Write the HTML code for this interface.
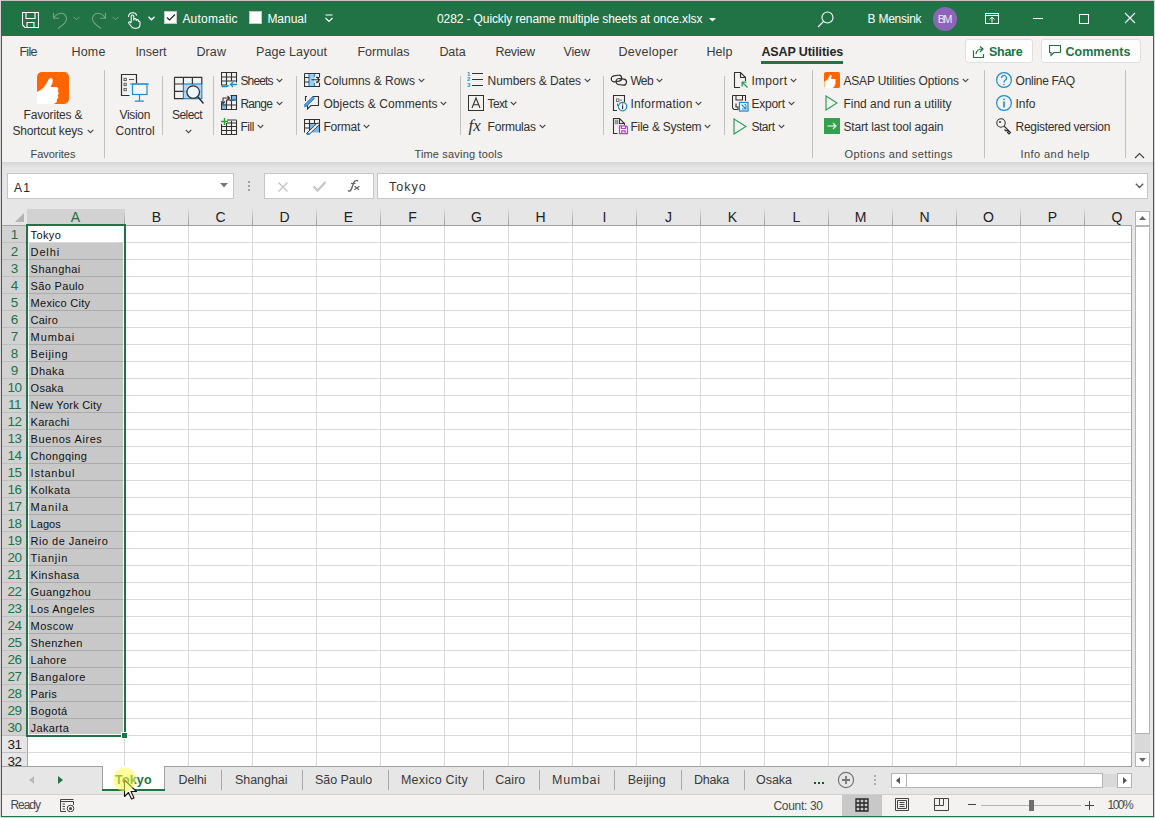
<!DOCTYPE html><html><head><meta charset="utf-8"><style>
html,body{margin:0;padding:0;width:1155px;height:818px;overflow:hidden;background:#f3f2f1}
body{position:relative;font-family:"Liberation Sans",sans-serif}
body>div,body>span,body>svg{position:absolute;display:block}
.t{white-space:pre}
</style></head><body>
<div style="left:0px;top:0px;width:1155px;height:818px;background:#f3f2f1"></div>
<div style="left:0px;top:0px;width:1155px;height:1px;background:#c9c5c7"></div>
<div style="left:1px;top:1px;width:1153px;height:35px;background:#217346"></div>
<div style="left:0px;top:0px;width:1px;height:818px;background:#d8d6d6"></div>
<div style="left:1px;top:36px;width:1px;height:781px;background:#217346"></div>
<div style="left:1153px;top:1px;width:1px;height:817px;background:#217346"></div>
<div style="left:1154px;top:0px;width:1px;height:818px;background:#d8d6d6"></div>
<div style="left:1px;top:816px;width:1153px;height:1px;background:#217346"></div>
<div style="left:0px;top:817px;width:1155px;height:1px;background:#d8d6d6"></div>
<svg style="left:22px;top:12px;" width="17" height="17" viewBox="0 0 17 17"><path d="M0.5 0.5 H16.5 V15.5 H3 L0.5 13z M4 0.5 V6.5 H13 V0.5 M5 15.5 V10.5 H12 V15.5" fill="none" stroke="#fff" stroke-width="1.1"/></svg>
<svg style="left:52px;top:12px;" width="17" height="17" viewBox="0 0 17 17"><path d="M1.5 0.8 V6.2 H7 M1.8 6 C4 2.5 7 1.3 9.5 1.3 C12.5 1.3 14.5 4 14.5 7 C14.5 10 12 12.5 6 16.5" fill="none" stroke="#6fa587" stroke-width="1.1"/></svg>
<svg style="left:73px;top:16px;" width="7" height="5" viewBox="0 0 7 5"><path d="M0.5 0.8 L3.5 3.8 L6.5 0.8" fill="none" stroke="#6fa587" stroke-width="1"/></svg>
<svg style="left:90px;top:12px;" width="17" height="17" viewBox="0 0 17 17"><path d="M15.5 0.8 V6.2 H10 M15.2 6 C13 2.5 10 1.3 7.5 1.3 C4.5 1.3 2.5 4 2.5 7 C2.5 10 5 12.5 11 16.5" fill="none" stroke="#6fa587" stroke-width="1.1"/></svg>
<svg style="left:112px;top:16px;" width="7" height="5" viewBox="0 0 7 5"><path d="M0.5 0.8 L3.5 3.8 L6.5 0.8" fill="none" stroke="#6fa587" stroke-width="1"/></svg>
<svg style="left:127px;top:11px;" width="14" height="18" viewBox="0 0 14 18"><path d="M1.5 6 A4.3 4.3 0 0 1 9.8 4.5 M4.2 11.5 V5.3 A1.3 1.3 0 0 1 6.8 5.3 V9.5 M6.8 8.8 A1.2 1.2 0 0 1 9.2 8.8 V10 M9.2 9.8 A1.2 1.2 0 0 1 11.6 9.8 V10.5 A1.1 1.1 0 0 1 13 11 V13.5 C13 16 11.5 17.3 9 17.3 H7.5 C6 17.3 5 16.5 4 15 L1.8 12.2 C1.2 11.2 2.4 10.3 3.3 11.2 L4.2 12.2" fill="none" stroke="#fff" stroke-width="1.05"/></svg>
<svg style="left:148px;top:16px;" width="7" height="5" viewBox="0 0 7 5"><path d="M0.5 0.8 L3.5 3.8 L6.5 0.8" fill="none" stroke="#fff" stroke-width="1.3"/></svg>
<div style="left:164px;top:11px;width:13px;height:13px;background:#fff;box-sizing:border-box;border:1px solid #c8c8c8"></div>
<svg style="left:166px;top:13px;" width="10" height="9" viewBox="0 0 10 9"><path d="M1 4.5 L3.5 7 L9 1.5" fill="none" stroke="#222" stroke-width="1.2"/></svg>
<span class="t" style="left:182.40px;top:12.84px;font-size:12px;line-height:12px;color:#fff;letter-spacing:0.230px;">Automatic</span>
<div style="left:249px;top:11px;width:13px;height:13px;background:#fff;box-sizing:border-box;border:1px solid #c8c8c8"></div>
<span class="t" style="left:267.40px;top:12.84px;font-size:12px;line-height:12px;color:#fff;letter-spacing:-0.032px;">Manual</span>
<svg style="left:325px;top:14px;" width="8" height="9" viewBox="0 0 8 9"><path d="M0.5 1 H7.5 M0.5 4 L4 7.5 L7.5 4" fill="none" stroke="#fff" stroke-width="1.1"/></svg>
<span class="t" style="left:437.00px;top:12.84px;font-size:12px;line-height:12px;color:#fff;letter-spacing:-0.110px;">0282 - Quickly rename multiple sheets at once.xlsx</span>
<svg style="left:709px;top:18px;" width="7" height="4" viewBox="0 0 7 4"><path d="M0 0 H7 L3.5 3.6z" fill="#fff"/></svg>
<svg style="left:817px;top:11px;" width="17" height="17" viewBox="0 0 17 17"><circle cx="10.5" cy="6.5" r="5.5" fill="none" stroke="#fff" stroke-width="1.1"/><path d="M6.6 10.4 L1 16" stroke="#fff" stroke-width="1.3"/></svg>
<span class="t" style="left:867.60px;top:13.44px;font-size:12px;line-height:12px;color:#fff;letter-spacing:-0.253px;">B Mensink</span>
<div style="left:933px;top:7px;width:24px;height:24px;border-radius:50%;background:#8b65b8"></div>
<span class="t" style="left:937.80px;top:14.09px;font-size:11px;line-height:11px;color:#f0e8f8;letter-spacing:-1.901px;">BM</span>
<svg style="left:985px;top:13px;" width="14" height="11" viewBox="0 0 14 11"><rect x="0.5" y="0.5" width="13" height="10" fill="none" stroke="#fff"/><path d="M0.5 2.5 H13.5 M7 9.5 V4 M4.5 6.5 L7 4 L9.5 6.5" fill="none" stroke="#fff"/></svg>
<div style="left:1033px;top:18px;width:10px;height:1px;background:#fff"></div>
<div style="left:1079px;top:14px;width:10px;height:10px;box-sizing:border-box;border:1px solid #fff"></div>
<svg style="left:1124px;top:12px;" width="12" height="12" viewBox="0 0 12 12"><path d="M1 1 L11 11 M11 1 L1 11" stroke="#fff" stroke-width="1.1"/></svg>
<span class="t" style="left:19.40px;top:45.92px;font-size:12.5px;line-height:12.5px;color:#3b3a39;letter-spacing:-0.714px;">File</span>
<span class="t" style="left:71.40px;top:45.92px;font-size:12.5px;line-height:12.5px;color:#3b3a39;letter-spacing:0.218px;">Home</span>
<span class="t" style="left:135.40px;top:45.92px;font-size:12.5px;line-height:12.5px;color:#3b3a39;letter-spacing:-0.013px;">Insert</span>
<span class="t" style="left:196.40px;top:45.92px;font-size:12.5px;line-height:12.5px;color:#3b3a39;letter-spacing:0.143px;">Draw</span>
<span class="t" style="left:256.00px;top:45.92px;font-size:12.5px;line-height:12.5px;color:#3b3a39;letter-spacing:0.080px;">Page Layout</span>
<span class="t" style="left:357.40px;top:45.92px;font-size:12.5px;line-height:12.5px;color:#3b3a39;letter-spacing:0.015px;">Formulas</span>
<span class="t" style="left:439.40px;top:45.92px;font-size:12.5px;line-height:12.5px;color:#3b3a39;letter-spacing:-0.068px;">Data</span>
<span class="t" style="left:495.40px;top:45.92px;font-size:12.5px;line-height:12.5px;color:#3b3a39;letter-spacing:-0.277px;">Review</span>
<span class="t" style="left:563.40px;top:45.92px;font-size:12.5px;line-height:12.5px;color:#3b3a39;letter-spacing:-0.090px;">View</span>
<span class="t" style="left:618.40px;top:45.92px;font-size:12.5px;line-height:12.5px;color:#3b3a39;letter-spacing:0.278px;">Developer</span>
<span class="t" style="left:706.40px;top:45.92px;font-size:12.5px;line-height:12.5px;color:#3b3a39;letter-spacing:0.097px;">Help</span>
<span class="t" style="left:761.40px;top:45.92px;font-size:12.5px;line-height:12.5px;color:#262626;letter-spacing:-0.102px;font-weight:bold;">ASAP Utilities</span>
<div style="left:761px;top:61px;width:82px;height:3px;background:#217346"></div>
<div style="left:965px;top:39px;width:68px;height:24px;background:#fdfdfd;border-radius:3px;box-sizing:border-box;border:1px solid #e1dfdd"></div>
<div style="left:1041px;top:39px;width:100px;height:24px;background:#fdfdfd;border-radius:3px;box-sizing:border-box;border:1px solid #e1dfdd"></div>
<svg style="left:972px;top:45px;" width="13" height="13" viewBox="0 0 13 13"><path d="M1.5 5.5 V12.5 H11.5 V9 M4 9 C4.5 5.5 7 4 10 4 M8 1.5 L11 4 L8 7" fill="none" stroke="#217346" stroke-width="1.2"/></svg>
<span class="t" style="left:989.00px;top:45.62px;font-size:12.5px;line-height:12.5px;color:#217346;letter-spacing:-0.286px;font-weight:bold;">Share</span>
<svg style="left:1049px;top:45px;" width="13" height="12" viewBox="0 0 13 12"><path d="M0.5 0.5 H11.5 V7.5 H5 L2 10.5 V7.5 H0.5z" fill="none" stroke="#217346" stroke-width="1.1"/></svg>
<span class="t" style="left:1065.40px;top:45.62px;font-size:12.5px;line-height:12.5px;color:#217346;letter-spacing:0.058px;font-weight:bold;">Comments</span>
<div style="left:104px;top:70px;width:1px;height:88px;background:#c2c2c2"></div>
<div style="left:162px;top:76px;width:1px;height:59px;background:#c2c2c2"></div>
<div style="left:213px;top:76px;width:1px;height:59px;background:#c2c2c2"></div>
<div style="left:296px;top:76px;width:1px;height:59px;background:#c2c2c2"></div>
<div style="left:460px;top:76px;width:1px;height:59px;background:#c2c2c2"></div>
<div style="left:603px;top:76px;width:1px;height:59px;background:#c2c2c2"></div>
<div style="left:724px;top:76px;width:1px;height:59px;background:#c2c2c2"></div>
<div style="left:812px;top:70px;width:1px;height:88px;background:#c2c2c2"></div>
<div style="left:984px;top:70px;width:1px;height:88px;background:#c2c2c2"></div>
<div style="left:1125px;top:70px;width:1px;height:88px;background:#c2c2c2"></div>
<div style="left:2px;top:162px;width:1151px;height:6px;background:linear-gradient(#d6d6d6,#e6e6e6)"></div>
<span class="t" style="left:30.50px;top:148.69px;font-size:11px;line-height:11px;color:#444444;letter-spacing:-0.042px;">Favorites</span>
<span class="t" style="left:414.40px;top:148.69px;font-size:11px;line-height:11px;color:#444444;letter-spacing:0.176px;">Time saving tools</span>
<span class="t" style="left:844.60px;top:148.69px;font-size:11px;line-height:11px;color:#444444;letter-spacing:0.406px;">Options and settings</span>
<span class="t" style="left:1020.40px;top:148.69px;font-size:11px;line-height:11px;color:#444444;letter-spacing:0.449px;">Info and help</span>
<div style="left:37px;top:72px;width:32px;height:32px;border-radius:5px;background:#ff6600;overflow:hidden"></div>
<svg style="left:37px;top:72px;" width="32" height="32" viewBox="0 0 32 32"><path d="M0 32 V20 C2.5 19 5 17 7 15 C9 12.5 10.5 9.5 11.5 7.5 C12.5 5 15.8 5.5 15.8 8.5 C15.8 11 14.5 13 13.5 15 L19 15 C21.5 15 22 18 20.5 19 C22 20 22 22.5 20.5 23.5 C21.8 24.5 21.5 27 19.5 27.5 C20.5 28.5 20 31 17.5 31.5 L16.5 32 z" fill="#fff"/></svg>
<span class="t" style="left:23.60px;top:108.84px;font-size:12px;line-height:12px;color:#323130;letter-spacing:-0.169px;">Favorites &amp;</span>
<span class="t" style="left:12.40px;top:124.84px;font-size:12px;line-height:12px;color:#323130;letter-spacing:-0.175px;">Shortcut keys</span>
<svg style="left:87px;top:129px;" width="7" height="5" viewBox="0 0 7 5"><path d="M0.7 0.9 L3.5 3.7 L6.3 0.9" fill="none" stroke="#444" stroke-width="1.1"/></svg>
<svg style="left:120px;top:73px;" width="31" height="30" viewBox="0 0 31 30"><path d="M9.5 22.5 H1.5 V1.5 H16.5 V10.5" fill="none" stroke="#323130" stroke-width="1.2"/><rect x="4" y="5.3" width="2.3" height="2.3" fill="none" stroke="#555" stroke-width="0.9"/><rect x="4" y="10.3" width="2.3" height="2.3" fill="none" stroke="#555" stroke-width="0.9"/><rect x="4" y="15.4" width="2.3" height="2.3" fill="none" stroke="#555" stroke-width="0.9"/><path d="M9 6.5 H14" stroke="#555" stroke-width="1"/><rect x="12.5" y="11" width="14.5" height="10.5" fill="#f5f5f5" stroke="#1e8bcd" stroke-width="1.2"/><path d="M10 11 H29 M19.5 21.5 V28.2 M14.8 28.2 H23.8" stroke="#1e8bcd" stroke-width="1.2" fill="none"/></svg>
<span class="t" style="left:119.40px;top:108.84px;font-size:12px;line-height:12px;color:#323130;letter-spacing:-0.294px;">Vision</span>
<span class="t" style="left:115.40px;top:124.84px;font-size:12px;line-height:12px;color:#323130;letter-spacing:0.086px;">Control</span>
<svg style="left:173px;top:76px;" width="32" height="30" viewBox="0 0 32 30"><rect x="10.4" y="8" width="18.4" height="14.7" fill="#b5d6f3" stroke="#1e8bcd" stroke-width="1.2"/><path d="M1.5 1.3 H28.8 V8 M1.5 1.3 V22.7 H10.4 M10.4 1.3 V8 M19.4 1.3 V8 M1.5 8 H10.4 M1.5 15.4 H10.4" fill="none" stroke="#323130" stroke-width="1.2"/><path d="M19.4 8 V22.7 M10.4 15.4 H28.8" stroke="#5aa5e0" stroke-width="0.8"/><circle cx="20.2" cy="16.1" r="6.3" fill="#eef5fb" stroke="#323130" stroke-width="1.3"/><path d="M24.8 20.8 L30.5 27.5" stroke="#323130" stroke-width="1.5"/></svg>
<span class="t" style="left:172.00px;top:108.84px;font-size:12px;line-height:12px;color:#323130;letter-spacing:-0.550px;">Select</span>
<svg style="left:184.5px;top:129px;" width="7" height="5" viewBox="0 0 7 5"><path d="M0.7 0.9 L3.5 3.7 L6.3 0.9" fill="none" stroke="#444" stroke-width="1.1"/></svg>
<span class="t" style="left:240.40px;top:74.84px;font-size:12px;line-height:12px;color:#323130;letter-spacing:-0.832px;">Sheets</span>
<svg style="left:276.40000000000003px;top:78px;" width="7" height="5" viewBox="0 0 7 5"><path d="M0.7 0.9 L3.5 3.7 L6.3 0.9" fill="none" stroke="#444" stroke-width="1.1"/></svg>
<span class="t" style="left:240.40px;top:97.84px;font-size:12px;line-height:12px;color:#323130;letter-spacing:-0.691px;">Range</span>
<svg style="left:275.8px;top:101px;" width="7" height="5" viewBox="0 0 7 5"><path d="M0.7 0.9 L3.5 3.7 L6.3 0.9" fill="none" stroke="#444" stroke-width="1.1"/></svg>
<span class="t" style="left:240.40px;top:120.84px;font-size:12px;line-height:12px;color:#323130;letter-spacing:-0.443px;">Fill</span>
<svg style="left:257.2px;top:124px;" width="7" height="5" viewBox="0 0 7 5"><path d="M0.7 0.9 L3.5 3.7 L6.3 0.9" fill="none" stroke="#444" stroke-width="1.1"/></svg>
<span class="t" style="left:323.40px;top:74.84px;font-size:12px;line-height:12px;color:#323130;letter-spacing:-0.033px;">Columns &amp; Rows</span>
<svg style="left:417.8px;top:78px;" width="7" height="5" viewBox="0 0 7 5"><path d="M0.7 0.9 L3.5 3.7 L6.3 0.9" fill="none" stroke="#444" stroke-width="1.1"/></svg>
<span class="t" style="left:323.40px;top:97.84px;font-size:12px;line-height:12px;color:#323130;letter-spacing:0.049px;">Objects &amp; Comments</span>
<svg style="left:440.4px;top:101px;" width="7" height="5" viewBox="0 0 7 5"><path d="M0.7 0.9 L3.5 3.7 L6.3 0.9" fill="none" stroke="#444" stroke-width="1.1"/></svg>
<span class="t" style="left:323.40px;top:120.84px;font-size:12px;line-height:12px;color:#323130;letter-spacing:-0.201px;">Format</span>
<svg style="left:363.2px;top:124px;" width="7" height="5" viewBox="0 0 7 5"><path d="M0.7 0.9 L3.5 3.7 L6.3 0.9" fill="none" stroke="#444" stroke-width="1.1"/></svg>
<span class="t" style="left:487.60px;top:74.84px;font-size:12px;line-height:12px;color:#323130;letter-spacing:-0.093px;">Numbers &amp; Dates</span>
<svg style="left:583.8px;top:78px;" width="7" height="5" viewBox="0 0 7 5"><path d="M0.7 0.9 L3.5 3.7 L6.3 0.9" fill="none" stroke="#444" stroke-width="1.1"/></svg>
<span class="t" style="left:487.60px;top:97.84px;font-size:12px;line-height:12px;color:#323130;letter-spacing:-0.669px;">Text</span>
<svg style="left:510.40000000000003px;top:101px;" width="7" height="5" viewBox="0 0 7 5"><path d="M0.7 0.9 L3.5 3.7 L6.3 0.9" fill="none" stroke="#444" stroke-width="1.1"/></svg>
<span class="t" style="left:487.60px;top:120.84px;font-size:12px;line-height:12px;color:#323130;letter-spacing:-0.230px;">Formulas</span>
<svg style="left:538.8px;top:124px;" width="7" height="5" viewBox="0 0 7 5"><path d="M0.7 0.9 L3.5 3.7 L6.3 0.9" fill="none" stroke="#444" stroke-width="1.1"/></svg>
<span class="t" style="left:630.40px;top:74.84px;font-size:12px;line-height:12px;color:#323130;letter-spacing:-0.629px;">Web</span>
<svg style="left:656.4px;top:78px;" width="7" height="5" viewBox="0 0 7 5"><path d="M0.7 0.9 L3.5 3.7 L6.3 0.9" fill="none" stroke="#444" stroke-width="1.1"/></svg>
<span class="t" style="left:630.40px;top:97.84px;font-size:12px;line-height:12px;color:#323130;letter-spacing:0.197px;">Information</span>
<svg style="left:695.1999999999999px;top:101px;" width="7" height="5" viewBox="0 0 7 5"><path d="M0.7 0.9 L3.5 3.7 L6.3 0.9" fill="none" stroke="#444" stroke-width="1.1"/></svg>
<span class="t" style="left:630.40px;top:120.84px;font-size:12px;line-height:12px;color:#323130;letter-spacing:-0.235px;">File &amp; System</span>
<svg style="left:704.4px;top:124px;" width="7" height="5" viewBox="0 0 7 5"><path d="M0.7 0.9 L3.5 3.7 L6.3 0.9" fill="none" stroke="#444" stroke-width="1.1"/></svg>
<span class="t" style="left:751.40px;top:74.84px;font-size:12px;line-height:12px;color:#323130;letter-spacing:0.318px;">Import</span>
<svg style="left:789.8px;top:78px;" width="7" height="5" viewBox="0 0 7 5"><path d="M0.7 0.9 L3.5 3.7 L6.3 0.9" fill="none" stroke="#444" stroke-width="1.1"/></svg>
<span class="t" style="left:751.40px;top:97.84px;font-size:12px;line-height:12px;color:#323130;letter-spacing:-0.217px;">Export</span>
<svg style="left:787.8px;top:101px;" width="7" height="5" viewBox="0 0 7 5"><path d="M0.7 0.9 L3.5 3.7 L6.3 0.9" fill="none" stroke="#444" stroke-width="1.1"/></svg>
<span class="t" style="left:751.40px;top:120.84px;font-size:12px;line-height:12px;color:#323130;letter-spacing:-0.436px;">Start</span>
<svg style="left:777.8px;top:124px;" width="7" height="5" viewBox="0 0 7 5"><path d="M0.7 0.9 L3.5 3.7 L6.3 0.9" fill="none" stroke="#444" stroke-width="1.1"/></svg>
<span class="t" style="left:843.40px;top:74.84px;font-size:12px;line-height:12px;color:#323130;letter-spacing:-0.138px;">ASAP Utilities Options</span>
<svg style="left:961.8px;top:78px;" width="7" height="5" viewBox="0 0 7 5"><path d="M0.7 0.9 L3.5 3.7 L6.3 0.9" fill="none" stroke="#444" stroke-width="1.1"/></svg>
<span class="t" style="left:843.40px;top:97.84px;font-size:12px;line-height:12px;color:#323130;letter-spacing:0.007px;">Find and run a utility</span>
<span class="t" style="left:843.40px;top:120.84px;font-size:12px;line-height:12px;color:#323130;letter-spacing:-0.136px;">Start last tool again</span>
<span class="t" style="left:1015.60px;top:74.84px;font-size:12px;line-height:12px;color:#323130;letter-spacing:-0.292px;">Online FAQ</span>
<span class="t" style="left:1015.60px;top:97.84px;font-size:12px;line-height:12px;color:#323130;letter-spacing:-0.072px;">Info</span>
<span class="t" style="left:1015.60px;top:120.84px;font-size:12px;line-height:12px;color:#323130;letter-spacing:-0.309px;">Registered version</span>
<svg style="left:221px;top:72px;" width="17" height="17" viewBox="0 0 17 17"><path d="M0.5 13.5 V0.5 H15.5 V10.5 M0.5 5 H15.5 M0.5 9 H15.5 M0.5 13 H6 M5.5 0.5 V13 M10.5 0.5 V9" fill="none" stroke="#323130" stroke-width="1.1"/><path d="M0.5 14.5 H5.5 Q7 14.5 7.5 13" fill="none" stroke="#1e8bcd" stroke-width="1.6"/><path d="M16 12.5 H9.5 M12 10 L9.5 12.5 L12 15" fill="none" stroke="#1e8bcd" stroke-width="1.3"/></svg>
<svg style="left:221px;top:95px;" width="17" height="16" viewBox="0 0 17 16"><rect x="10.5" y="1" width="5" height="4" fill="#7ab8ec"/><rect x="0.5" y="8.5" width="5" height="5.5" fill="#7ab8ec"/><path d="M0.5 7.5 V14.5 H15.5 V0.5 H9.5 M5.5 5 V14.5 M10.5 0.5 V14.5 M5.5 5 H15.5 M0.5 10 H15.5" fill="none" stroke="#323130" stroke-width="1.1"/><path d="M9 5.5 H13 M2 8.5 V3 H8.5 M6.5 1 L8.5 3 L6.5 5 M0 6.5 L2 8.5 L4 6.5" fill="none" stroke="#323130" stroke-width="1.1"/><path d="M10 5 H15.5" stroke="#1e8bcd" stroke-width="1.1"/></svg>
<svg style="left:221px;top:118px;" width="17" height="17" viewBox="0 0 17 17"><path d="M0.5 6 V16.5 H15.5 V2 M6 5 H15.5 M0.5 8.5 H15.5 M0.5 12.5 H15.5 M5.5 5 V16.5 M10.5 2 V16.5" fill="none" stroke="#323130" stroke-width="1.1"/><path d="M6 2 H15.5" stroke="#8a8a8a" stroke-width="1.8"/><path d="M3.5 0 V7 M0 3.5 H7" stroke="#2ca02c" stroke-width="1.4"/></svg>
<svg style="left:304px;top:73px;" width="17" height="15" viewBox="0 0 17 15"><rect x="5" y="1" width="5.5" height="12.5" fill="#9fcbf0"/><path d="M5 1 V13.5 M10.5 1 V4 M10.5 10 V13.5" stroke="#1e8bcd" stroke-width="1.2"/><path d="M0.5 0.5 H15.5 V4 M0.5 0.5 V13.5 H15.5 V10 M0.5 4.5 H5 M0.5 9 H5 M12 4.5 H15.5 M12 9 H15.5" fill="none" stroke="#323130" stroke-width="1.1"/><path d="M7.5 6.8 H15.5 M12.5 3.8 L15.5 6.8 L12.5 9.8" fill="none" stroke="#323130" stroke-width="1.1"/></svg>
<svg style="left:304px;top:94px;" width="17" height="17" viewBox="0 0 17 17"><path d="M8.5 2.5 H14.5 V11.5 H7 L3.5 15 V11.5 H1.5 V10 M1.5 7 V2.5 H3" fill="none" stroke="#323130" stroke-width="1.1"/><path d="M0.8 10.2 L8.6 2.4 L10.6 4.4 L2.8 12.2 L0.2 12.8z" fill="#3d93da" stroke="#2b7fc6" stroke-width="0.7"/><path d="M2.5 10.2 L8.5 4.2" stroke="#cfe6fa" stroke-width="0.6" stroke-dasharray="1 1"/></svg>
<svg style="left:304px;top:119px;" width="17" height="16" viewBox="0 0 17 16"><rect x="5.5" y="4.5" width="10" height="9" fill="#7ab8ec"/><path d="M0.5 13.5 V0.5 H15.5 V13.5 M0.5 4.5 H15.5 M0.5 9 H5 M5.5 0.5 V13.5 M10.5 0.5 V4.5" fill="none" stroke="#323130" stroke-width="1.1"/><path d="M2.5 14.5 L12.5 4.8 Q14.5 3.5 15.2 4.5 Q15.8 5.5 14.2 6.8 L5 15.5 Q3.5 16.5 2.5 14.5z" fill="#fff" stroke="#323130" stroke-width="1"/><path d="M2 14 Q3 16.8 6 15.5 L4.5 13.5z" fill="#1e8bcd"/></svg>
<svg style="left:467px;top:70px;" width="17" height="17" viewBox="0 0 17 17"><text x="0" y="5.5" font-size="6" font-family="Liberation Sans" font-weight="bold" fill="#1e8bcd">1</text><text x="0" y="11" font-size="6" font-family="Liberation Sans" font-weight="bold" fill="#1e8bcd">2</text><text x="0" y="16.5" font-size="6" font-family="Liberation Sans" font-weight="bold" fill="#1e8bcd">3</text><path d="M5 3.5 H16 M5 9.5 H16 M5 15.5 H16" stroke="#323130" stroke-width="1.2"/></svg>
<svg style="left:468px;top:95px;" width="17" height="16" viewBox="0 0 17 16"><rect x="0.5" y="0.5" width="15" height="15" fill="none" stroke="#323130"/><path d="M4 13 L8 3 L12 13 M5.3 9.7 H10.7" fill="none" stroke="#323130" stroke-width="1.1"/></svg>
<span class="t" style="left:468.50px;top:117.11px;font-size:17px;line-height:17px;color:#323130;font-family:'Liberation Serif';font-style:italic;">fx</span>
<svg style="left:610px;top:74px;" width="18" height="12" viewBox="0 0 18 12"><rect x="1.2" y="1.5" width="10.5" height="6" rx="3" ry="3" fill="none" stroke="#323130" stroke-width="1.2" transform="rotate(-8 6.5 4.5)"/><rect x="6" y="4.8" width="10.5" height="6" rx="3" ry="3" fill="none" stroke="#323130" stroke-width="1.2" transform="rotate(8 11 7.8)"/></svg>
<svg style="left:612px;top:95px;" width="16" height="17" viewBox="0 0 16 17"><path d="M5 15.5 H1.5 V0.5 H12.5 V7" fill="none" stroke="#323130" stroke-width="1.1"/><rect x="4.5" y="4" width="2.5" height="2.5" fill="none" stroke="#666" stroke-width="0.9"/><path d="M8 5.2 H10 M5.5 8.5 V11" stroke="#666" stroke-width="0.9"/><circle cx="10.6" cy="11.6" r="4.2" fill="#fff" stroke="#1e8bcd" stroke-width="1.2"/><path d="M10.6 10.3 V14.3 M10.6 8.6 V9.4" stroke="#333" stroke-width="1.2"/></svg>
<svg style="left:612px;top:118px;" width="17" height="17" viewBox="0 0 17 17"><path d="M5.5 15.5 H1.5 V0.5 H7.5 L12.5 5.5 V7 M7.5 0.5 V5.5 H12.5" fill="none" stroke="#323130" stroke-width="1.1"/><path d="M2.5 3 H6.5 M2.5 5 H6.5 M3.8 1.5 V6.5 M5.3 1.5 V6.5" stroke="#666" stroke-width="0.7"/><path d="M7.5 7.8 H14 L15.5 9.3 V15.7 H7.5z M9.5 7.8 V10.5 H13.5 V7.8 M9.8 15.7 V12.8 H13.2 V15.7" fill="none" stroke="#b146c2" stroke-width="1.2"/></svg>
<svg style="left:733px;top:72px;" width="16" height="17" viewBox="0 0 16 17"><path d="M7 15.5 H1.5 V0.5 H7.5 L12.5 5.5 V9 M7.5 0.5 V5.5 H12.5" fill="none" stroke="#323130" stroke-width="1.1"/><path d="M14.5 15.5 L9.5 10.5 M9.2 14.5 V10.2 H13.5" fill="none" stroke="#2ca05a" stroke-width="1.3"/></svg>
<svg style="left:732px;top:95px;" width="17" height="17" viewBox="0 0 17 17"><path d="M0.5 0.5 H13.5 V6 M0.5 0.5 V13 L2 14.5 H6 V12 H4 V8.5 M4 0.5 V5 H10.5 V0.5" fill="none" stroke="#323130" stroke-width="1.1"/><rect x="7.5" y="7.5" width="8.5" height="8.5" fill="#fff" stroke="#1e8bcd" stroke-width="1.3"/><path d="M9.5 9.5 L14 14 M14 10 V14 H10 M12.5 9.5 H14" fill="none" stroke="#1e8bcd" stroke-width="1.1"/></svg>
<svg style="left:733px;top:118px;" width="14" height="17" viewBox="0 0 14 17"><path d="M1 1 L13 8.5 L1 16z" fill="none" stroke="#2ca05a" stroke-width="1.2"/></svg>
<div style="left:824px;top:72px;width:16px;height:16px;border-radius:2px;background:#ff6600;overflow:hidden"></div>
<svg style="left:824px;top:72px;" width="16" height="16" viewBox="0 0 16 16"><path d="M0.5 16 V9.5 C2 9 3.5 8 4.5 6 C5 4 5.8 2.5 7 3 C8 3.5 7.5 5.5 7 7 L10.5 7 C12 7 12 8.5 11 9 C12 9.5 12 10.5 11 11 C12 11.5 11.5 13 10.5 13 C11 13.8 10.5 15 9.5 15 L9 16z" fill="#fff"/></svg>
<svg style="left:825px;top:95px;" width="13" height="16" viewBox="0 0 13 16"><path d="M1 1 L12 8 L1 15z" fill="none" stroke="#2ca05a" stroke-width="1.2"/></svg>
<div style="left:824px;top:118px;width:16px;height:16px;background:#33a14a"></div>
<svg style="left:824px;top:118px;" width="16" height="16" viewBox="0 0 16 16"><path d="M3.5 8 H12 M9 5 L12 8 L9 11" fill="none" stroke="#fff" stroke-width="1.1"/></svg>
<svg style="left:996px;top:72px;" width="17" height="17" viewBox="0 0 17 17"><circle cx="8" cy="8" r="7.4" fill="none" stroke="#1e8bcd" stroke-width="1.2"/><path d="M5.5 6 a2.5 2.5 0 1 1 3.5 2.3 C8 8.8 8 9.5 8 10.5" fill="none" stroke="#1e8bcd" stroke-width="1.2"/><circle cx="8" cy="12.5" r="0.8" fill="#1e8bcd"/></svg>
<svg style="left:996px;top:95px;" width="17" height="17" viewBox="0 0 17 17"><circle cx="8" cy="8" r="7.4" fill="none" stroke="#1e8bcd" stroke-width="1.2"/><path d="M8 6.5 V12.5" stroke="#1e8bcd" stroke-width="1.6"/><circle cx="8" cy="4.3" r="0.9" fill="#1e8bcd"/></svg>
<svg style="left:996px;top:118px;" width="17" height="17" viewBox="0 0 17 17"><circle cx="5" cy="5" r="4.2" fill="none" stroke="#323130" stroke-width="1.1"/><circle cx="4" cy="4" r="1" fill="#323130"/><path d="M8 8 L14.5 14.5 L13 16 L11.5 14.5 L12.5 13.5 L11 12 L10 13 L8.5 11.5" fill="none" stroke="#323130" stroke-width="1.1"/></svg>
<svg style="left:1134px;top:152px;" width="11" height="7" viewBox="0 0 11 7"><path d="M1 6 L5.5 1.5 L10 6" fill="none" stroke="#444" stroke-width="1.2"/></svg>
<div style="left:2px;top:168px;width:1151px;height:598px;background:#e6e6e6"></div>
<div style="left:7px;top:173px;width:227px;height:26px;background:#fff;box-sizing:border-box;border:1px solid #c6c6c6"></div>
<span class="t" style="left:14.00px;top:181.84px;font-size:12px;line-height:12px;color:#262626;letter-spacing:1.322px;">A1</span>
<svg style="left:220px;top:183px;" width="8" height="5" viewBox="0 0 8 5"><path d="M0 0 H8 L4 4.5z" fill="#777"/></svg>
<div style="left:248px;top:181px;width:2px;height:2px;background:#a0a0a0"></div>
<div style="left:248px;top:185px;width:2px;height:2px;background:#a0a0a0"></div>
<div style="left:248px;top:189px;width:2px;height:2px;background:#a0a0a0"></div>
<div style="left:264px;top:173px;width:110px;height:26px;background:#fff;box-sizing:border-box;border:1px solid #c6c6c6"></div>
<svg style="left:277px;top:182px;" width="12" height="10" viewBox="0 0 12 10"><path d="M1.5 0.5 L10.5 9.5 M10.5 0.5 L1.5 9.5" stroke="#c4c4c4" stroke-width="1.3"/></svg>
<svg style="left:312px;top:180px;" width="15" height="13" viewBox="0 0 15 13"><path d="M1.5 6.5 L5.5 10.5 L13.5 2" fill="none" stroke="#c6c6c6" stroke-width="2.4"/></svg>
<svg style="left:346px;top:178px;" width="16" height="16" viewBox="0 0 16 16"><path d="M2.5 12.8 C4 13.3 5 12.5 5.6 10.5 L7.8 4.5 C8.4 3 9.6 2.3 11.5 2.8" fill="none" stroke="#666" stroke-width="1.4" stroke-linecap="round"/><path d="M5 5.5 H9.5" stroke="#666" stroke-width="1.1"/><path d="M8.5 8.3 L13 11.8 M13.5 8.3 L8.3 11.8" stroke="#666" stroke-width="1.2"/></svg>
<div style="left:377px;top:173px;width:771px;height:26px;background:#fff;box-sizing:border-box;border:1px solid #c6c6c6"></div>
<span class="t" style="left:389.00px;top:181.42px;font-size:12.5px;line-height:12.5px;color:#333;letter-spacing:0.986px;">Tokyo</span>
<svg style="left:1135px;top:183px;" width="9" height="6" viewBox="0 0 9 6"><path d="M0.8 0.8 L4.5 4.5 L8.2 0.8" fill="none" stroke="#555" stroke-width="1.3"/></svg>
<div style="left:2px;top:209px;width:1130px;height:16px;background:#e6e6e6"></div>
<div style="left:27px;top:209px;width:98px;height:16px;background:#d2d2d2"></div>
<div style="left:2px;top:225px;width:1130px;height:1px;background:#a2a2a2"></div>
<div style="left:124px;top:209px;width:1px;height:16px;background:linear-gradient(#dadada,#9c9c9c)"></div>
<div style="left:188px;top:209px;width:1px;height:16px;background:linear-gradient(#dadada,#9c9c9c)"></div>
<div style="left:252px;top:209px;width:1px;height:16px;background:linear-gradient(#dadada,#9c9c9c)"></div>
<div style="left:316px;top:209px;width:1px;height:16px;background:linear-gradient(#dadada,#9c9c9c)"></div>
<div style="left:380px;top:209px;width:1px;height:16px;background:linear-gradient(#dadada,#9c9c9c)"></div>
<div style="left:444px;top:209px;width:1px;height:16px;background:linear-gradient(#dadada,#9c9c9c)"></div>
<div style="left:508px;top:209px;width:1px;height:16px;background:linear-gradient(#dadada,#9c9c9c)"></div>
<div style="left:572px;top:209px;width:1px;height:16px;background:linear-gradient(#dadada,#9c9c9c)"></div>
<div style="left:636px;top:209px;width:1px;height:16px;background:linear-gradient(#dadada,#9c9c9c)"></div>
<div style="left:700px;top:209px;width:1px;height:16px;background:linear-gradient(#dadada,#9c9c9c)"></div>
<div style="left:764px;top:209px;width:1px;height:16px;background:linear-gradient(#dadada,#9c9c9c)"></div>
<div style="left:828px;top:209px;width:1px;height:16px;background:linear-gradient(#dadada,#9c9c9c)"></div>
<div style="left:892px;top:209px;width:1px;height:16px;background:linear-gradient(#dadada,#9c9c9c)"></div>
<div style="left:956px;top:209px;width:1px;height:16px;background:linear-gradient(#dadada,#9c9c9c)"></div>
<div style="left:1020px;top:209px;width:1px;height:16px;background:linear-gradient(#dadada,#9c9c9c)"></div>
<div style="left:1084px;top:209px;width:1px;height:16px;background:linear-gradient(#dadada,#9c9c9c)"></div>
<span class="t" style="left:70.83px;top:210.15px;font-size:14px;line-height:14px;color:#217346;">A</span>
<span class="t" style="left:151.83px;top:210.15px;font-size:14px;line-height:14px;color:#222;">B</span>
<span class="t" style="left:215.44px;top:210.15px;font-size:14px;line-height:14px;color:#222;">C</span>
<span class="t" style="left:279.44px;top:210.15px;font-size:14px;line-height:14px;color:#222;">D</span>
<span class="t" style="left:343.83px;top:210.15px;font-size:14px;line-height:14px;color:#222;">E</span>
<span class="t" style="left:408.22px;top:210.15px;font-size:14px;line-height:14px;color:#222;">F</span>
<span class="t" style="left:471.06px;top:210.15px;font-size:14px;line-height:14px;color:#222;">G</span>
<span class="t" style="left:535.44px;top:210.15px;font-size:14px;line-height:14px;color:#222;">H</span>
<span class="t" style="left:602.56px;top:210.15px;font-size:14px;line-height:14px;color:#222;">I</span>
<span class="t" style="left:665.00px;top:210.15px;font-size:14px;line-height:14px;color:#222;">J</span>
<span class="t" style="left:727.83px;top:210.15px;font-size:14px;line-height:14px;color:#222;">K</span>
<span class="t" style="left:792.61px;top:210.15px;font-size:14px;line-height:14px;color:#222;">L</span>
<span class="t" style="left:854.67px;top:210.15px;font-size:14px;line-height:14px;color:#222;">M</span>
<span class="t" style="left:919.44px;top:210.15px;font-size:14px;line-height:14px;color:#222;">N</span>
<span class="t" style="left:983.06px;top:210.15px;font-size:14px;line-height:14px;color:#222;">O</span>
<span class="t" style="left:1047.83px;top:210.15px;font-size:14px;line-height:14px;color:#222;">P</span>
<span class="t" style="left:1111.56px;top:210.15px;font-size:14px;line-height:14px;color:#222;">Q</span>
<svg style="left:15px;top:213px;" width="9" height="9" viewBox="0 0 9 9"><path d="M9 0 V9 H0z" fill="#b4b4b4"/></svg>
<div style="left:27px;top:226px;width:1105px;height:540px;background:#fff"></div>
<div style="left:27px;top:242px;width:1105px;height:1px;background:#d9d9d9"></div>
<div style="left:27px;top:259px;width:1105px;height:1px;background:#d9d9d9"></div>
<div style="left:27px;top:276px;width:1105px;height:1px;background:#d9d9d9"></div>
<div style="left:27px;top:293px;width:1105px;height:1px;background:#d9d9d9"></div>
<div style="left:27px;top:310px;width:1105px;height:1px;background:#d9d9d9"></div>
<div style="left:27px;top:327px;width:1105px;height:1px;background:#d9d9d9"></div>
<div style="left:27px;top:344px;width:1105px;height:1px;background:#d9d9d9"></div>
<div style="left:27px;top:361px;width:1105px;height:1px;background:#d9d9d9"></div>
<div style="left:27px;top:378px;width:1105px;height:1px;background:#d9d9d9"></div>
<div style="left:27px;top:395px;width:1105px;height:1px;background:#d9d9d9"></div>
<div style="left:27px;top:412px;width:1105px;height:1px;background:#d9d9d9"></div>
<div style="left:27px;top:429px;width:1105px;height:1px;background:#d9d9d9"></div>
<div style="left:27px;top:446px;width:1105px;height:1px;background:#d9d9d9"></div>
<div style="left:27px;top:463px;width:1105px;height:1px;background:#d9d9d9"></div>
<div style="left:27px;top:480px;width:1105px;height:1px;background:#d9d9d9"></div>
<div style="left:27px;top:497px;width:1105px;height:1px;background:#d9d9d9"></div>
<div style="left:27px;top:514px;width:1105px;height:1px;background:#d9d9d9"></div>
<div style="left:27px;top:531px;width:1105px;height:1px;background:#d9d9d9"></div>
<div style="left:27px;top:548px;width:1105px;height:1px;background:#d9d9d9"></div>
<div style="left:27px;top:565px;width:1105px;height:1px;background:#d9d9d9"></div>
<div style="left:27px;top:582px;width:1105px;height:1px;background:#d9d9d9"></div>
<div style="left:27px;top:599px;width:1105px;height:1px;background:#d9d9d9"></div>
<div style="left:27px;top:616px;width:1105px;height:1px;background:#d9d9d9"></div>
<div style="left:27px;top:633px;width:1105px;height:1px;background:#d9d9d9"></div>
<div style="left:27px;top:650px;width:1105px;height:1px;background:#d9d9d9"></div>
<div style="left:27px;top:667px;width:1105px;height:1px;background:#d9d9d9"></div>
<div style="left:27px;top:684px;width:1105px;height:1px;background:#d9d9d9"></div>
<div style="left:27px;top:701px;width:1105px;height:1px;background:#d9d9d9"></div>
<div style="left:27px;top:718px;width:1105px;height:1px;background:#d9d9d9"></div>
<div style="left:27px;top:735px;width:1105px;height:1px;background:#d9d9d9"></div>
<div style="left:27px;top:752px;width:1105px;height:1px;background:#d9d9d9"></div>
<div style="left:27px;top:769px;width:1105px;height:1px;background:#d9d9d9"></div>
<div style="left:124px;top:226px;width:1px;height:540px;background:#d9d9d9"></div>
<div style="left:188px;top:226px;width:1px;height:540px;background:#d9d9d9"></div>
<div style="left:252px;top:226px;width:1px;height:540px;background:#d9d9d9"></div>
<div style="left:316px;top:226px;width:1px;height:540px;background:#d9d9d9"></div>
<div style="left:380px;top:226px;width:1px;height:540px;background:#d9d9d9"></div>
<div style="left:444px;top:226px;width:1px;height:540px;background:#d9d9d9"></div>
<div style="left:508px;top:226px;width:1px;height:540px;background:#d9d9d9"></div>
<div style="left:572px;top:226px;width:1px;height:540px;background:#d9d9d9"></div>
<div style="left:636px;top:226px;width:1px;height:540px;background:#d9d9d9"></div>
<div style="left:700px;top:226px;width:1px;height:540px;background:#d9d9d9"></div>
<div style="left:764px;top:226px;width:1px;height:540px;background:#d9d9d9"></div>
<div style="left:828px;top:226px;width:1px;height:540px;background:#d9d9d9"></div>
<div style="left:892px;top:226px;width:1px;height:540px;background:#d9d9d9"></div>
<div style="left:956px;top:226px;width:1px;height:540px;background:#d9d9d9"></div>
<div style="left:1020px;top:226px;width:1px;height:540px;background:#d9d9d9"></div>
<div style="left:1084px;top:226px;width:1px;height:540px;background:#d9d9d9"></div>
<div style="left:2px;top:226px;width:25px;height:540px;background:#e6e6e6"></div>
<div style="left:2px;top:226px;width:25px;height:509px;background:#d2d2d2"></div>
<div style="left:2px;top:242px;width:25px;height:1px;background:#c0c0c0"></div>
<div style="left:2px;top:259px;width:25px;height:1px;background:#c0c0c0"></div>
<div style="left:2px;top:276px;width:25px;height:1px;background:#c0c0c0"></div>
<div style="left:2px;top:293px;width:25px;height:1px;background:#c0c0c0"></div>
<div style="left:2px;top:310px;width:25px;height:1px;background:#c0c0c0"></div>
<div style="left:2px;top:327px;width:25px;height:1px;background:#c0c0c0"></div>
<div style="left:2px;top:344px;width:25px;height:1px;background:#c0c0c0"></div>
<div style="left:2px;top:361px;width:25px;height:1px;background:#c0c0c0"></div>
<div style="left:2px;top:378px;width:25px;height:1px;background:#c0c0c0"></div>
<div style="left:2px;top:395px;width:25px;height:1px;background:#c0c0c0"></div>
<div style="left:2px;top:412px;width:25px;height:1px;background:#c0c0c0"></div>
<div style="left:2px;top:429px;width:25px;height:1px;background:#c0c0c0"></div>
<div style="left:2px;top:446px;width:25px;height:1px;background:#c0c0c0"></div>
<div style="left:2px;top:463px;width:25px;height:1px;background:#c0c0c0"></div>
<div style="left:2px;top:480px;width:25px;height:1px;background:#c0c0c0"></div>
<div style="left:2px;top:497px;width:25px;height:1px;background:#c0c0c0"></div>
<div style="left:2px;top:514px;width:25px;height:1px;background:#c0c0c0"></div>
<div style="left:2px;top:531px;width:25px;height:1px;background:#c0c0c0"></div>
<div style="left:2px;top:548px;width:25px;height:1px;background:#c0c0c0"></div>
<div style="left:2px;top:565px;width:25px;height:1px;background:#c0c0c0"></div>
<div style="left:2px;top:582px;width:25px;height:1px;background:#c0c0c0"></div>
<div style="left:2px;top:599px;width:25px;height:1px;background:#c0c0c0"></div>
<div style="left:2px;top:616px;width:25px;height:1px;background:#c0c0c0"></div>
<div style="left:2px;top:633px;width:25px;height:1px;background:#c0c0c0"></div>
<div style="left:2px;top:650px;width:25px;height:1px;background:#c0c0c0"></div>
<div style="left:2px;top:667px;width:25px;height:1px;background:#c0c0c0"></div>
<div style="left:2px;top:684px;width:25px;height:1px;background:#c0c0c0"></div>
<div style="left:2px;top:701px;width:25px;height:1px;background:#c0c0c0"></div>
<div style="left:2px;top:718px;width:25px;height:1px;background:#c0c0c0"></div>
<div style="left:2px;top:735px;width:25px;height:1px;background:#c0c0c0"></div>
<div style="left:2px;top:752px;width:25px;height:1px;background:#c0c0c0"></div>
<div style="left:2px;top:769px;width:25px;height:1px;background:#c0c0c0"></div>
<div style="left:26px;top:226px;width:1px;height:540px;background:#a8a8a8"></div>
<div style="left:26px;top:737px;width:2px;height:29px;background:#e6e6e6"></div>
<div style="left:27px;top:737px;width:1px;height:29px;background:#a8a8a8"></div>
<span class="t" style="left:10.65px;top:227.87px;font-size:13.5px;line-height:13.5px;color:#217346;letter-spacing:-0.5px;">1</span>
<span class="t" style="left:10.65px;top:244.87px;font-size:13.5px;line-height:13.5px;color:#217346;letter-spacing:-0.5px;">2</span>
<span class="t" style="left:10.65px;top:261.87px;font-size:13.5px;line-height:13.5px;color:#217346;letter-spacing:-0.5px;">3</span>
<span class="t" style="left:10.65px;top:278.87px;font-size:13.5px;line-height:13.5px;color:#217346;letter-spacing:-0.5px;">4</span>
<span class="t" style="left:10.65px;top:295.87px;font-size:13.5px;line-height:13.5px;color:#217346;letter-spacing:-0.5px;">5</span>
<span class="t" style="left:10.65px;top:312.87px;font-size:13.5px;line-height:13.5px;color:#217346;letter-spacing:-0.5px;">6</span>
<span class="t" style="left:10.65px;top:329.87px;font-size:13.5px;line-height:13.5px;color:#217346;letter-spacing:-0.5px;">7</span>
<span class="t" style="left:10.65px;top:346.87px;font-size:13.5px;line-height:13.5px;color:#217346;letter-spacing:-0.5px;">8</span>
<span class="t" style="left:10.65px;top:363.87px;font-size:13.5px;line-height:13.5px;color:#217346;letter-spacing:-0.5px;">9</span>
<span class="t" style="left:7.59px;top:380.87px;font-size:13.5px;line-height:13.5px;color:#217346;letter-spacing:-0.5px;">10</span>
<span class="t" style="left:8.09px;top:397.87px;font-size:13.5px;line-height:13.5px;color:#217346;letter-spacing:-0.5px;">11</span>
<span class="t" style="left:7.59px;top:414.87px;font-size:13.5px;line-height:13.5px;color:#217346;letter-spacing:-0.5px;">12</span>
<span class="t" style="left:7.59px;top:431.87px;font-size:13.5px;line-height:13.5px;color:#217346;letter-spacing:-0.5px;">13</span>
<span class="t" style="left:7.59px;top:448.87px;font-size:13.5px;line-height:13.5px;color:#217346;letter-spacing:-0.5px;">14</span>
<span class="t" style="left:7.59px;top:465.87px;font-size:13.5px;line-height:13.5px;color:#217346;letter-spacing:-0.5px;">15</span>
<span class="t" style="left:7.59px;top:482.87px;font-size:13.5px;line-height:13.5px;color:#217346;letter-spacing:-0.5px;">16</span>
<span class="t" style="left:7.59px;top:499.87px;font-size:13.5px;line-height:13.5px;color:#217346;letter-spacing:-0.5px;">17</span>
<span class="t" style="left:7.59px;top:516.87px;font-size:13.5px;line-height:13.5px;color:#217346;letter-spacing:-0.5px;">18</span>
<span class="t" style="left:7.59px;top:533.87px;font-size:13.5px;line-height:13.5px;color:#217346;letter-spacing:-0.5px;">19</span>
<span class="t" style="left:7.59px;top:550.87px;font-size:13.5px;line-height:13.5px;color:#217346;letter-spacing:-0.5px;">20</span>
<span class="t" style="left:7.59px;top:567.87px;font-size:13.5px;line-height:13.5px;color:#217346;letter-spacing:-0.5px;">21</span>
<span class="t" style="left:7.59px;top:584.87px;font-size:13.5px;line-height:13.5px;color:#217346;letter-spacing:-0.5px;">22</span>
<span class="t" style="left:7.59px;top:601.87px;font-size:13.5px;line-height:13.5px;color:#217346;letter-spacing:-0.5px;">23</span>
<span class="t" style="left:7.59px;top:618.87px;font-size:13.5px;line-height:13.5px;color:#217346;letter-spacing:-0.5px;">24</span>
<span class="t" style="left:7.59px;top:635.87px;font-size:13.5px;line-height:13.5px;color:#217346;letter-spacing:-0.5px;">25</span>
<span class="t" style="left:7.59px;top:652.87px;font-size:13.5px;line-height:13.5px;color:#217346;letter-spacing:-0.5px;">26</span>
<span class="t" style="left:7.59px;top:669.87px;font-size:13.5px;line-height:13.5px;color:#217346;letter-spacing:-0.5px;">27</span>
<span class="t" style="left:7.59px;top:686.87px;font-size:13.5px;line-height:13.5px;color:#217346;letter-spacing:-0.5px;">28</span>
<span class="t" style="left:7.59px;top:703.87px;font-size:13.5px;line-height:13.5px;color:#217346;letter-spacing:-0.5px;">29</span>
<span class="t" style="left:7.59px;top:720.87px;font-size:13.5px;line-height:13.5px;color:#217346;letter-spacing:-0.5px;">30</span>
<span class="t" style="left:7.59px;top:737.87px;font-size:13.5px;line-height:13.5px;color:#222;letter-spacing:-0.5px;">31</span>
<span class="t" style="left:7.59px;top:754.87px;font-size:13.5px;line-height:13.5px;color:#222;letter-spacing:-0.5px;">32</span>
<div style="left:29px;top:243px;width:94px;height:491px;background:#c8c8c8"></div>
<div style="left:29px;top:259px;width:94px;height:1px;background:#aaaaaa"></div>
<div style="left:29px;top:276px;width:94px;height:1px;background:#aaaaaa"></div>
<div style="left:29px;top:293px;width:94px;height:1px;background:#aaaaaa"></div>
<div style="left:29px;top:310px;width:94px;height:1px;background:#aaaaaa"></div>
<div style="left:29px;top:327px;width:94px;height:1px;background:#aaaaaa"></div>
<div style="left:29px;top:344px;width:94px;height:1px;background:#aaaaaa"></div>
<div style="left:29px;top:361px;width:94px;height:1px;background:#aaaaaa"></div>
<div style="left:29px;top:378px;width:94px;height:1px;background:#aaaaaa"></div>
<div style="left:29px;top:395px;width:94px;height:1px;background:#aaaaaa"></div>
<div style="left:29px;top:412px;width:94px;height:1px;background:#aaaaaa"></div>
<div style="left:29px;top:429px;width:94px;height:1px;background:#aaaaaa"></div>
<div style="left:29px;top:446px;width:94px;height:1px;background:#aaaaaa"></div>
<div style="left:29px;top:463px;width:94px;height:1px;background:#aaaaaa"></div>
<div style="left:29px;top:480px;width:94px;height:1px;background:#aaaaaa"></div>
<div style="left:29px;top:497px;width:94px;height:1px;background:#aaaaaa"></div>
<div style="left:29px;top:514px;width:94px;height:1px;background:#aaaaaa"></div>
<div style="left:29px;top:531px;width:94px;height:1px;background:#aaaaaa"></div>
<div style="left:29px;top:548px;width:94px;height:1px;background:#aaaaaa"></div>
<div style="left:29px;top:565px;width:94px;height:1px;background:#aaaaaa"></div>
<div style="left:29px;top:582px;width:94px;height:1px;background:#aaaaaa"></div>
<div style="left:29px;top:599px;width:94px;height:1px;background:#aaaaaa"></div>
<div style="left:29px;top:616px;width:94px;height:1px;background:#aaaaaa"></div>
<div style="left:29px;top:633px;width:94px;height:1px;background:#aaaaaa"></div>
<div style="left:29px;top:650px;width:94px;height:1px;background:#aaaaaa"></div>
<div style="left:29px;top:667px;width:94px;height:1px;background:#aaaaaa"></div>
<div style="left:29px;top:684px;width:94px;height:1px;background:#aaaaaa"></div>
<div style="left:29px;top:701px;width:94px;height:1px;background:#aaaaaa"></div>
<div style="left:29px;top:718px;width:94px;height:1px;background:#aaaaaa"></div>
<div style="left:29px;top:735px;width:94px;height:1px;background:#aaaaaa"></div>
<div style="left:28px;top:226px;width:96px;height:16px;background:#fff"></div>
<div style="left:26px;top:224px;width:100px;height:2px;background:#217346"></div>
<div style="left:26px;top:224px;width:2px;height:513px;background:#217346"></div>
<div style="left:124px;top:224px;width:2px;height:513px;background:#217346"></div>
<div style="left:26px;top:735px;width:100px;height:2px;background:#217346"></div>
<div style="left:121px;top:732px;width:7px;height:7px;background:#fff"></div>
<div style="left:122px;top:733px;width:5px;height:5px;background:#217346"></div>
<span class="t" style="left:30.60px;top:230.09px;font-size:11px;line-height:11px;color:#111;letter-spacing:0.372px;">Tokyo</span>
<span class="t" style="left:30.60px;top:247.09px;font-size:11px;line-height:11px;color:#111;letter-spacing:0.855px;">Delhi</span>
<span class="t" style="left:30.60px;top:264.09px;font-size:11px;line-height:11px;color:#111;letter-spacing:0.461px;">Shanghai</span>
<span class="t" style="left:30.60px;top:281.09px;font-size:11px;line-height:11px;color:#111;letter-spacing:0.329px;">São Paulo</span>
<span class="t" style="left:30.60px;top:298.09px;font-size:11px;line-height:11px;color:#111;letter-spacing:0.253px;">Mexico City</span>
<span class="t" style="left:30.60px;top:315.09px;font-size:11px;line-height:11px;color:#111;letter-spacing:0.228px;">Cairo</span>
<span class="t" style="left:30.60px;top:332.09px;font-size:11px;line-height:11px;color:#111;letter-spacing:0.919px;">Mumbai</span>
<span class="t" style="left:30.60px;top:349.09px;font-size:11px;line-height:11px;color:#111;letter-spacing:0.650px;">Beijing</span>
<span class="t" style="left:30.60px;top:366.09px;font-size:11px;line-height:11px;color:#111;letter-spacing:0.439px;">Dhaka</span>
<span class="t" style="left:30.60px;top:383.09px;font-size:11px;line-height:11px;color:#111;letter-spacing:0.264px;">Osaka</span>
<span class="t" style="left:30.60px;top:400.09px;font-size:11px;line-height:11px;color:#111;letter-spacing:0.227px;">New York City</span>
<span class="t" style="left:30.60px;top:417.09px;font-size:11px;line-height:11px;color:#111;letter-spacing:0.218px;">Karachi</span>
<span class="t" style="left:30.60px;top:434.09px;font-size:11px;line-height:11px;color:#111;letter-spacing:0.587px;">Buenos Aires</span>
<span class="t" style="left:30.60px;top:451.09px;font-size:11px;line-height:11px;color:#111;letter-spacing:0.382px;">Chongqing</span>
<span class="t" style="left:30.60px;top:468.09px;font-size:11px;line-height:11px;color:#111;letter-spacing:0.749px;">Istanbul</span>
<span class="t" style="left:30.60px;top:485.09px;font-size:11px;line-height:11px;color:#111;letter-spacing:0.493px;">Kolkata</span>
<span class="t" style="left:30.60px;top:502.09px;font-size:11px;line-height:11px;color:#111;letter-spacing:1.010px;">Manila</span>
<span class="t" style="left:30.60px;top:519.09px;font-size:11px;line-height:11px;color:#111;letter-spacing:0.056px;">Lagos</span>
<span class="t" style="left:30.60px;top:536.09px;font-size:11px;line-height:11px;color:#111;letter-spacing:0.481px;">Rio de Janeiro</span>
<span class="t" style="left:30.60px;top:553.09px;font-size:11px;line-height:11px;color:#111;letter-spacing:0.815px;">Tianjin</span>
<span class="t" style="left:30.60px;top:570.09px;font-size:11px;line-height:11px;color:#111;letter-spacing:0.483px;">Kinshasa</span>
<span class="t" style="left:30.60px;top:587.09px;font-size:11px;line-height:11px;color:#111;letter-spacing:0.391px;">Guangzhou</span>
<span class="t" style="left:30.60px;top:604.09px;font-size:11px;line-height:11px;color:#111;letter-spacing:0.395px;">Los Angeles</span>
<span class="t" style="left:30.60px;top:621.09px;font-size:11px;line-height:11px;color:#111;letter-spacing:0.446px;">Moscow</span>
<span class="t" style="left:30.60px;top:638.09px;font-size:11px;line-height:11px;color:#111;letter-spacing:0.321px;">Shenzhen</span>
<span class="t" style="left:30.60px;top:655.09px;font-size:11px;line-height:11px;color:#111;letter-spacing:0.307px;">Lahore</span>
<span class="t" style="left:30.60px;top:672.09px;font-size:11px;line-height:11px;color:#111;letter-spacing:0.593px;">Bangalore</span>
<span class="t" style="left:30.60px;top:689.09px;font-size:11px;line-height:11px;color:#111;letter-spacing:0.280px;">Paris</span>
<span class="t" style="left:30.60px;top:706.09px;font-size:11px;line-height:11px;color:#111;letter-spacing:0.355px;">Bogotá</span>
<span class="t" style="left:30.60px;top:723.09px;font-size:11px;line-height:11px;color:#111;letter-spacing:0.361px;">Jakarta</span>
<div style="left:1132px;top:209px;width:21px;height:557px;background:#e6e6e6"></div>
<div style="left:1131px;top:225px;width:1px;height:542px;background:#a8a8a8"></div>
<div style="left:1135px;top:211px;width:15px;height:15px;background:#fff;box-sizing:border-box;border:1px solid #b4b4b4"></div>
<svg style="left:1139px;top:216px;" width="7" height="4" viewBox="0 0 7 4"><path d="M0 4 H7 L3.5 0z" fill="#666"/></svg>
<div style="left:1135px;top:226px;width:15px;height:508px;background:#fff;box-sizing:border-box;border:1px solid #b4b4b4"></div>
<div style="left:1135px;top:734px;width:15px;height:18px;background:#d9d9d9"></div>
<div style="left:1135px;top:752px;width:15px;height:15px;background:#fff;box-sizing:border-box;border:1px solid #b4b4b4"></div>
<svg style="left:1139px;top:758px;" width="7" height="4" viewBox="0 0 7 4"><path d="M0 0 H7 L3.5 4z" fill="#666"/></svg>
<div style="left:2px;top:767px;width:1151px;height:27px;background:#e6e6e6"></div>
<div style="left:2px;top:766px;width:1130px;height:1px;background:#a0a0a0"></div>
<div style="left:2px;top:794px;width:1151px;height:1px;background:#cfcfcf"></div>
<svg style="left:29px;top:776px;" width="5" height="8" viewBox="0 0 5 8"><path d="M5 0 V8 L0 4z" fill="#b8b8b8"/></svg>
<svg style="left:58px;top:776px;" width="5" height="8" viewBox="0 0 5 8"><path d="M0 0 V8 L5 4z" fill="#217346"/></svg>
<div style="left:102px;top:766px;width:63px;height:24px;background:#fff"></div>
<div style="left:102px;top:766px;width:1px;height:24px;background:#a0a0a0"></div>
<div style="left:164px;top:766px;width:1px;height:24px;background:#a0a0a0"></div>
<div style="left:102px;top:789px;width:63px;height:2px;background:#217346"></div>
<span class="t" style="left:115.00px;top:774.02px;font-size:12.5px;line-height:12.5px;color:#217346;letter-spacing:0.179px;font-weight:bold;">Tokyo</span>
<span class="t" style="left:178.60px;top:774.02px;font-size:12.5px;line-height:12.5px;color:#3b3a39;letter-spacing:-0.125px;">Delhi</span>
<span class="t" style="left:235.00px;top:774.02px;font-size:12.5px;line-height:12.5px;color:#3b3a39;letter-spacing:-0.045px;">Shanghai</span>
<span class="t" style="left:315.00px;top:774.02px;font-size:12.5px;line-height:12.5px;color:#3b3a39;letter-spacing:-0.048px;">São Paulo</span>
<span class="t" style="left:401.00px;top:774.02px;font-size:12.5px;line-height:12.5px;color:#3b3a39;letter-spacing:0.208px;">Mexico City</span>
<span class="t" style="left:495.30px;top:774.02px;font-size:12.5px;line-height:12.5px;color:#3b3a39;letter-spacing:0.031px;">Cairo</span>
<span class="t" style="left:552.00px;top:774.02px;font-size:12.5px;line-height:12.5px;color:#3b3a39;letter-spacing:0.713px;">Mumbai</span>
<span class="t" style="left:627.70px;top:774.02px;font-size:12.5px;line-height:12.5px;color:#3b3a39;letter-spacing:0.083px;">Beijing</span>
<span class="t" style="left:694.00px;top:774.02px;font-size:12.5px;line-height:12.5px;color:#3b3a39;letter-spacing:-0.222px;">Dhaka</span>
<span class="t" style="left:756.00px;top:774.02px;font-size:12.5px;line-height:12.5px;color:#3b3a39;letter-spacing:-0.047px;">Osaka</span>
<div style="left:221px;top:770px;width:1px;height:20px;background:#a8a8a8"></div>
<div style="left:302px;top:770px;width:1px;height:20px;background:#a8a8a8"></div>
<div style="left:388px;top:770px;width:1px;height:20px;background:#a8a8a8"></div>
<div style="left:483px;top:770px;width:1px;height:20px;background:#a8a8a8"></div>
<div style="left:539px;top:770px;width:1px;height:20px;background:#a8a8a8"></div>
<div style="left:614px;top:770px;width:1px;height:20px;background:#a8a8a8"></div>
<div style="left:681px;top:770px;width:1px;height:20px;background:#a8a8a8"></div>
<div style="left:744px;top:770px;width:1px;height:20px;background:#a8a8a8"></div>
<div style="left:814px;top:782px;width:2px;height:2px;background:#0e5c2a"></div>
<div style="left:818px;top:782px;width:2px;height:2px;background:#0e5c2a"></div>
<div style="left:822px;top:782px;width:2px;height:2px;background:#0e5c2a"></div>
<svg style="left:837px;top:771px;" width="18" height="18" viewBox="0 0 18 18"><circle cx="9" cy="9" r="7.6" fill="none" stroke="#777" stroke-width="1.2"/><path d="M9 5 V13 M5 9 H13" stroke="#777" stroke-width="1.8"/></svg>
<div style="left:874px;top:775px;width:2px;height:2px;background:#b0b0b0"></div>
<div style="left:874px;top:779px;width:2px;height:2px;background:#b0b0b0"></div>
<div style="left:874px;top:783px;width:2px;height:2px;background:#b0b0b0"></div>
<div style="left:891px;top:773px;width:16px;height:15px;background:#fff;box-sizing:border-box;border:1px solid #b4b4b4"></div>
<div style="left:906px;top:773px;width:197px;height:15px;background:#fff;box-sizing:border-box;border:1px solid #b4b4b4"></div>
<div style="left:1103px;top:774px;width:14px;height:13px;background:#d9d9d9"></div>
<div style="left:1117px;top:773px;width:15px;height:15px;background:#fff;box-sizing:border-box;border:1px solid #b4b4b4"></div>
<svg style="left:896px;top:777px;" width="4" height="7" viewBox="0 0 4 7"><path d="M4 0 V7 L0 3.5z" fill="#555"/></svg>
<svg style="left:1123px;top:777px;" width="4" height="7" viewBox="0 0 4 7"><path d="M0 0 V7 L4 3.5z" fill="#555"/></svg>
<span class="t" style="left:10.40px;top:799.34px;font-size:12px;line-height:12px;color:#4a4a4a;letter-spacing:-1.022px;">Ready</span>
<svg style="left:60px;top:799px;" width="15" height="13" viewBox="0 0 15 13"><path d="M0.5 0.5 H13.5 M0.5 2.5 H13.5 V6 M0.5 0.5 V12.5 H6 M2.5 5 H5 M2.5 7.5 H5 M2.5 10 H5" fill="none" stroke="#444"/><circle cx="10.5" cy="9.5" r="3.3" fill="none" stroke="#444"/><circle cx="10.5" cy="9.5" r="1.5" fill="#444"/></svg>
<span class="t" style="left:773.50px;top:799.64px;font-size:12px;line-height:12px;color:#4a4a4a;letter-spacing:-0.317px;">Count: 30</span>
<div style="left:842px;top:795px;width:40px;height:21px;background:#c8c8c8"></div>
<svg style="left:855px;top:798px;" width="14" height="14" viewBox="0 0 14 14"><path d="M1 1 H13 V13 H1z M1 5 H13 M1 9 H13 M5 1 V13 M9 1 V13" fill="none" stroke="#262626" stroke-width="1.3"/></svg>
<svg style="left:895px;top:798px;" width="15" height="14" viewBox="0 0 15 14"><path d="M0.5 0.5 H13.5 V12.5 H0.5z M2.5 2.5 H11.5 V10.5 H2.5z M4.5 4.5 H9.5 M4.5 6.5 H9.5 M4.5 8.5 H9.5" fill="none" stroke="#444"/></svg>
<svg style="left:934px;top:798px;" width="16" height="14" viewBox="0 0 16 14"><path d="M0.5 0.5 H14.5 V12.5 H0.5z M5.5 0.5 V7.5 H0.5 M9.5 0.5 V7.5 H5.5" fill="none" stroke="#444"/></svg>
<div style="left:968px;top:804px;width:8px;height:1px;background:#444"></div>
<div style="left:981px;top:805px;width:100px;height:1px;background:#b4b4b4"></div>
<div style="left:1029px;top:800px;width:5px;height:11px;background:#6e6e6e"></div>
<svg style="left:1085px;top:801px;" width="9" height="9" viewBox="0 0 9 9"><path d="M4.5 0 V9 M0 4.5 H9" stroke="#444" stroke-width="1"/></svg>
<span class="t" style="left:1107.60px;top:799.14px;font-size:12px;line-height:12px;color:#4a4a4a;letter-spacing:-1.564px;">100%</span>
<svg style="left:123px;top:779px;" width="14" height="21" viewBox="0 0 14 21"><path d="M1.5 1 V17.5 L5.5 13.5 L8.5 20 L11 19 L8 12.5 H13.5z" fill="#fff" stroke="#111" stroke-width="1.1" stroke-linejoin="round"/></svg>
<div style="left:112.7px;top:768.3px;width:23px;height:23px;border-radius:50%;background:rgba(255,255,70,0.55)"></div>
</body></html>
